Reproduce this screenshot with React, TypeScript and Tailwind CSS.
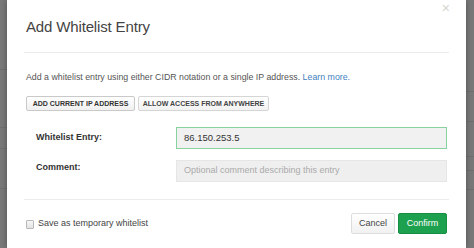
import React from "react";

export default function App() {
  const font = { fontFamily: '"Liberation Sans", Arial, Helvetica, sans-serif' };
  return (
    <div className="w-[474px] h-[248px] flex overflow-hidden bg-[#797979]" style={font}>
      <div className="w-[7px] shrink-0 flex flex-col">
        <div className="h-[70px] border-b border-[#6f6f6f]" />
        <div className="h-[58px] border-b border-[#707070]" />
        <div className="h-[21px] border-b border-[#707070]" />
        <div className="h-[40px] border-b border-[#707070]" />
      </div>
      <div className="w-[459px] shrink-0 bg-white flex flex-col relative shadow-[0_0_6px_rgba(0,0,0,0.35)]">
        <button className="absolute right-[16px] top-[1px] text-[14px] leading-[14px] text-[#d4d4d4]">×</button>
        <div className="mx-[17px] h-[53px] border-b border-[#ececec] flex items-center pl-[2px] pt-[2px]">
          <h2 className="text-[15px] leading-[20px] text-[#444] tracking-[-0.15px]">Add Whitelist Entry</h2>
        </div>
        <div className="pl-[19px] pr-[19px] flex flex-col">
          <p className="mt-[17px] h-[14px] text-[8.8px] leading-[14px] text-[#555]">
            Add a whitelist entry using either CIDR notation or a single IP address.{" "}
            <a className="text-[#3f7fc0]">Learn more.</a>
          </p>
          <div className="mt-[12px] flex gap-[3px]">
            <button className="h-[15px] w-[109px] rounded-[2px] border border-[#c9c9c9] bg-gradient-to-b from-white to-[#f0f0f0] text-[7px] font-bold text-[#333] leading-[13px]">
              ADD CURRENT IP ADDRESS
            </button>
            <button className="h-[15px] w-[131px] rounded-[2px] border border-[#d5d5d5] bg-gradient-to-b from-white to-[#f2f2f2] text-[7px] font-bold text-[#444] leading-[13px]">
              ALLOW ACCESS FROM ANYWHERE
            </button>
          </div>
          <div className="mt-[16px] flex items-center h-[22px]">
            <label className="w-[150px] pl-[10px] text-[9px] font-bold text-[#333]">Whitelist Entry:</label>
            <div className="w-[271px] h-[22px] border border-[#86d39f] bg-[#f1f1f1] flex items-center pl-[7px] text-[9.5px] text-[#333]">
              86.150.253.5
            </div>
          </div>
          <div className="mt-[11px] flex items-center h-[22px]">
            <label className="w-[150px] pl-[10px] text-[9px] font-bold text-[#333] -mt-[7px]">Comment:</label>
            <div className="w-[271px] h-[22px] border border-[#e6e6e6] bg-[#efefef] flex items-center pl-[7px] text-[9px] text-[#aaa]">
              Optional comment describing this entry
            </div>
          </div>
        </div>
        <div className="mx-[17px] mt-[17px] border-t border-[#ececec]" />
        <div className="pl-[19px] pr-[19px] mt-[13px] flex items-center justify-between">
          <label className="flex items-center gap-[4px] text-[9px] text-[#444] mt-[1px]">
            <span className="w-[8px] h-[9px] border border-[#b9b9b9] rounded-[1px] bg-gradient-to-b from-[#f7f7f7] to-[#e2e2e2]" />
            Save as temporary whitelist
          </label>
          <div className="flex gap-[3px]">
            <button className="h-[21px] w-[44px] rounded-[2px] border border-[#dedede] bg-gradient-to-b from-white to-[#f1f1f1] text-[9px] text-[#444]">
              Cancel
            </button>
            <button className="h-[21px] w-[49px] rounded-[2px] border border-[#178f43] bg-[#1da14f] text-[9px] text-white">
              Confirm
            </button>
          </div>
        </div>
      </div>
      <div className="flex-1 flex flex-col">
        <div className="h-[92px] border-b border-[#6f6f6f]" />
        <div className="h-[30px] border-b border-[#707070]" />
        <div className="h-[35px] border-b border-[#707070]" />
        <div className="h-[14px] border-b border-[#707070]" />
        <div className="h-[19px] border-b border-[#707070]" />
      </div>
    </div>
  );
}
